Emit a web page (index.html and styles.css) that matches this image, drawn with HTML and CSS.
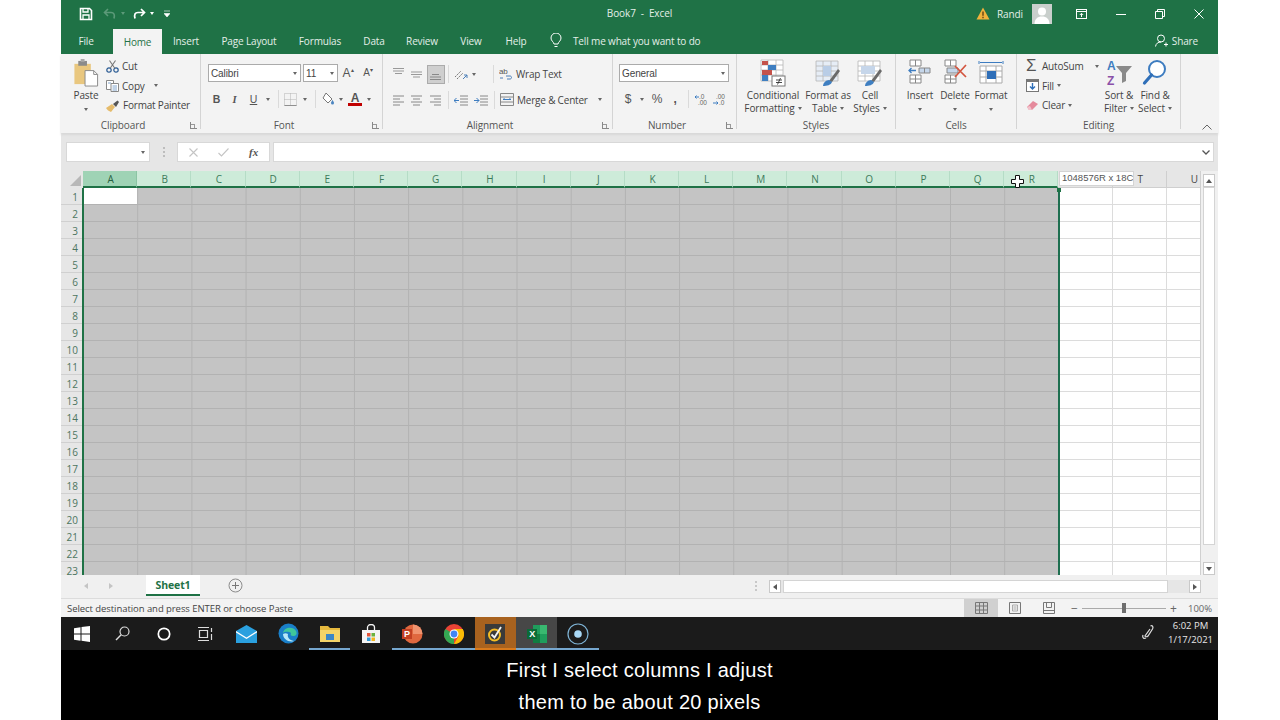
FILE: index.html
```html
<!DOCTYPE html>
<html>
<head>
    <meta charset="UTF-8">
    <title>Book7 - Excel</title>
    <link rel="stylesheet" href="styles.css">
</head>
<body>
<div class="screen">

    <!-- title bar -->
    <div class="titlebar">
        <div class="qat">
            <svg class="qat-save" width="14" height="14" viewBox="0 0 14 14"><path d="M1.5 1.5h9l2 2v9h-11z" fill="none" stroke="#fff" stroke-width="1.6"/><path d="M4 2v3h5V2M4 12V8h6v4" fill="none" stroke="#fff" stroke-width="1.3"/></svg>
            <svg class="qat-undo" width="14" height="12" viewBox="0 0 14 12"><path d="M5 1L1.5 4.5 5 8M2 4.5h6c3 0 4 2 3 6" fill="none" stroke="#5c9a79" stroke-width="1.6"/></svg>
            <i class="caret caret-dim"></i>
            <svg class="qat-redo" width="14" height="12" viewBox="0 0 14 12"><path d="M9 1l3.5 3.5L9 8M12 4.5H6c-3 0-4 2-3 6" fill="none" stroke="#fff" stroke-width="1.7"/></svg>
            <i class="caret caret-white"></i>
            <svg class="qat-more" width="6" height="8" viewBox="0 0 6 8"><path d="M0 1h6M0 3.5h6L3 7z" fill="#fff" stroke="#fff" stroke-width=".6"/></svg>
        </div>
        <div class="doc-title">Book7&nbsp; -&nbsp; Excel</div>
        <div class="win-tools">
            <svg class="warn" width="14" height="13" viewBox="0 0 14 13"><path d="M7 .5l6.5 12H.5z" fill="#f0b23c"/><path d="M7 4.5v4.2M7 9.8v1.4" stroke="#5a3b10" stroke-width="1.3"/></svg>
            <span class="user">Randi</span>
            <svg class="avatar" width="20" height="20" viewBox="0 0 20 20"><rect width="20" height="20" fill="#c9cfcc"/><circle cx="10" cy="7.5" r="4" fill="#fff"/><path d="M2.5 20c0-5 3-7.5 7.5-7.5s7.5 2.500 7.500 7.500z" fill="#fff"/></svg>
            <svg class="win-ribbon" width="11" height="10" viewBox="0 0 11 10"><rect x=".5" y=".5" width="10" height="9" fill="none" stroke="#fff"/><path d="M.5 2.500h10" stroke="#fff"/><path d="M5.500 8V4.500M3.800 6l1.700-1.700L7.200 6" fill="none" stroke="#fff"/></svg>
            <svg class="win-min" width="10" height="10" viewBox="0 0 10 10"><path d="M0 5.500h10" stroke="#fff"/></svg>
            <svg class="win-max" width="10" height="10" viewBox="0 0 10 10"><path d="M.5 2.500h7v7h-7zM2.500 2.500v-2h7v7h-2" fill="none" stroke="#fff"/></svg>
            <svg class="win-close" width="10" height="10" viewBox="0 0 10 10"><path d="M.5.5l9 9M9.500.5l-9 9" stroke="#fff"/></svg>
        </div>
    </div>

    <!-- tabs -->
    <div class="tabs">
        <span class="tab-file">File</span>
        <span class="tab-on">Home</span>
        <span>Insert</span>
        <span>Page Layout</span>
        <span>Formulas</span>
        <span>Data</span>
        <span>Review</span>
        <span>View</span>
        <span>Help</span>
        <div class="tell">
            <svg width="12" height="15" viewBox="0 0 12 15"><path d="M4 11C3.500 8.500 1 8 1 5a5 5 0 0 1 10 0c0 3-2.500 3.500-3 6zM4.500 13.500h3" fill="none" stroke="#fff"/></svg>
            <span>Tell me what you want to do</span>
        </div>
        <div class="share">
            <svg width="13" height="13" viewBox="0 0 13 13"><circle cx="6" cy="4.500" r="3.500" fill="none" stroke="#fff"/><path d="M.5 12.500c.5-3 2.500-4.500 5.500-4.500M9 10.500h4M11 8.500v4" fill="none" stroke="#fff"/></svg>
            <span>Share</span>
        </div>
    </div>

    <!-- ribbon -->
    <div class="ribbon">
        <div class="group g-clip">
            <div class="gbody clip-body">
                <div class="big paste">
                    <svg width="26" height="29" viewBox="0 0 26 29"><path d="M1 5h17v21H1z" fill="#e9c77f"/><rect x="5" y="2" width="9" height="5" fill="#8b8b8b"/><rect x="7.500" y="0" width="4" height="3" fill="#a8a8a8"/><path d="M12 12h9l4 4v12H12z" fill="#fff" stroke="#8a8a8a"/><path d="M21 12v4h4" fill="none" stroke="#8a8a8a"/></svg>
                    <span>Paste</span>
                    <i class="caret"></i>
                </div>
                <div class="small-col">
                    <div class="small"><svg width="13" height="13" viewBox="0 0 13 13"><circle cx="3" cy="10" r="2.200" fill="none" stroke="#2c5c94" stroke-width="1.200"/><circle cx="10" cy="10" r="2.200" fill="none" stroke="#2c5c94" stroke-width="1.200"/><path d="M4.200 8.200L9.500.5M8.800 8.200L3.500.5" stroke="#777" stroke-width="1.100"/></svg><span>Cut</span></div>
                    <div class="small"><svg width="13" height="13" viewBox="0 0 13 13"><path d="M.5 1.500h7v9h-7z" fill="#fff" stroke="#888"/><path d="M5 4.500h7.500v8H5z" fill="#fff" stroke="#888"/><path d="M2 4h3M6.500 7h4.500M6.500 9h4.500M6.500 11h4.500" stroke="#4b7fb8" stroke-width=".7"/></svg><span>Copy</span><i class="caret copy-caret"></i></div>
                    <div class="small"><svg width="14" height="13" viewBox="0 0 14 13"><path d="M0 9l6-4 3 3-4 5c-2-1-4-2-5-4z" fill="#e5bb6b"/><path d="M7 5l3 3 3-5-1.500-1.500z" fill="#555"/></svg><span>Format Painter</span></div>
                </div>
            </div>
            <div class="glabel"><span>Clipboard</span><i class="launcher"></i></div>
        </div>

        <div class="group g-font">
            <div class="gbody rows">
                <div class="row font-r1">
                    <div class="combo"><span>Calibri</span><i class="caret"></i></div>
                    <div class="combo"><span>11</span><i class="caret"></i></div>
                    <span class="grow-a">A<sup>&#9652;</sup></span>
                    <span class="shrink-a">A<sup>&#9662;</sup></span>
                </div>
                <div class="row font-r2">
                    <b class="sym">B</b>
                    <i class="sym sym-i">I</i>
                    <u class="sym">U</u>
                    <i class="caret"></i>
                    <i class="sep"></i>
                    <svg width="13" height="13" viewBox="0 0 13 13"><path d="M.5.500h12v12H.5zM6.500.5v12M.5 6.500h12" fill="none" stroke="#b3b3b3" stroke-dasharray="1 1"/><path d="M.5 12.500h12" stroke="#8f8f8f"/></svg>
                    <i class="caret"></i>
                    <i class="sep"></i>
                    <svg width="14" height="14" viewBox="0 0 14 14"><path d="M5 1l6 6-4 4-5-5z" fill="#fff" stroke="#777"/><path d="M11.500 8s1.500 2 1.500 3a1.500 1.500 0 0 1-3 0c0-1 1.500-3 1.500-3z" fill="#4b85c0"/></svg>
                    <i class="caret"></i>
                    <span class="font-color">A</span>
                    <i class="caret"></i>
                </div>
            </div>
            <div class="glabel"><span>Font</span><i class="launcher"></i></div>
        </div>

        <div class="group g-align">
            <div class="gbody rows">
                <div class="row align-r1">
                    <svg width="13" height="13" viewBox="0 0 13 13"><path d="M1 .5h11M1 3h11M3 5.500h7" stroke="#999"/></svg>
                    <svg width="13" height="13" viewBox="0 0 13 13"><path d="M1 4h11M1 6.500h11M3 9h7" stroke="#999"/></svg>
                    <span class="align-on"><svg width="13" height="13" viewBox="0 0 13 13"><path d="M3 6.500h7M1 9h11M1 11.500h11" stroke="#888"/></svg></span>
                    <i class="sep"></i>
                    <svg width="14" height="13" viewBox="0 0 14 13"><path d="M1 9l6-6M3 11l6-6" stroke="#777" stroke-dasharray="2 1"/><path d="M9 11l4-4M13 7h-3M13 7v3" fill="none" stroke="#4b7fb8"/></svg>
                    <i class="caret"></i>
                    <span></span>
                    <i class="sep"></i>
                    <div class="small wrap-btn"><svg width="14" height="14" viewBox="0 0 14 14"><text x="0" y="7" class="wrap-ab">ab</text><path d="M1 11h3M7 9h4c2 0 2 3 0 3H8" fill="none" stroke="#4b7fb8"/></svg><span>Wrap Text</span></div>
                </div>
                <div class="row align-r2">
                    <svg width="13" height="11" viewBox="0 0 13 11"><path d="M1 1h11M1 4h7M1 7h11M1 10h7" stroke="#888"/></svg>
                    <svg width="13" height="11" viewBox="0 0 13 11"><path d="M1 1h11M3 4h7M1 7h11M3 10h7" stroke="#888"/></svg>
                    <svg width="13" height="11" viewBox="0 0 13 11"><path d="M1 1h11M5 4h7M1 7h11M5 10h7" stroke="#888"/></svg>
                    <i class="sep"></i>
                    <svg width="14" height="11" viewBox="0 0 14 11"><path d="M6 1h8M6 4h8M6 7h8M6 10h8" stroke="#888"/><path d="M5 5.500H0M2.500 3L0 5.500 2.500 8" fill="none" stroke="#3d7cc0"/></svg>
                    <svg width="14" height="11" viewBox="0 0 14 11"><path d="M6 1h8M6 4h8M6 7h8M6 10h8" stroke="#888"/><path d="M0 5.500h5M2.500 3L5 5.500 2.500 8" fill="none" stroke="#3d7cc0"/></svg>
                    <i class="sep"></i>
                    <div class="small merge-btn"><svg width="14" height="13" viewBox="0 0 14 13"><path d="M.5.500h13v12H.5zM.5 4h13M.5 9h13" fill="none" stroke="#888"/><path d="M3 6.500h8M3 6.500l1.500-1M11 6.500l-1.500-1" fill="none" stroke="#3d7cc0"/></svg><span>Merge &amp; Center</span><i class="caret merge-caret"></i></div>
                </div>
            </div>
            <div class="glabel"><span>Alignment</span><i class="launcher"></i></div>
        </div>

        <div class="group g-num">
            <div class="gbody rows">
                <div class="row">
                    <div class="combo combo-num"><span>General</span><i class="caret"></i></div>
                </div>
                <div class="row num-r2">
                    <span class="num-sym">$</span>
                    <i class="caret"></i>
                    <span class="num-sym">%</span>
                    <b class="num-comma">,</b>
                    <i class="sep"></i>
                    <svg width="14" height="13" viewBox="0 0 14 13"><text x="4" y="6" class="dec">.0</text><text x="3" y="12" class="dec">.00</text><path d="M0 4h4M1.500 2.500L0 4l1.500 1.500" fill="none" stroke="#3d7cc0"/></svg>
                    <svg width="14" height="13" viewBox="0 0 14 13"><text x="3" y="6" class="dec">.00</text><text x="6" y="12" class="dec">.0</text><path d="M0 10h5M3.500 8.500L5 10l-1.500 1.500" fill="none" stroke="#3d7cc0"/></svg>
                </div>
            </div>
            <div class="glabel"><span>Number</span><i class="launcher"></i></div>
        </div>

        <div class="group g-styles">
            <div class="gbody bigs">
                <div class="big b-cond">
                    <svg width="26" height="28" viewBox="0 0 26 28"><path d="M1 1h22v21H1zM8 1v21M16 1v21M1 6h22M1 11h22M1 16h22" fill="#fff" stroke="#b5b5b5" stroke-width=".8"/><path d="M2 2h6v4H2z" fill="#c4524a"/><path d="M8 6h8v5H8z" fill="#3f7fc1"/><path d="M2 11h10v5H2z" fill="#c4524a"/><path d="M2 16h6v6H2z" fill="#3f7fc1"/><rect x="12" y="17" width="13" height="10" fill="#fff" stroke="#777"/><path d="M16 21h6M16 23.500h6M20.500 19l-3 6.500" stroke="#333" stroke-width=".9"/></svg>
                    <span>Conditional</span>
                    <span>Formatting<i class="caret caret-in"></i></span>
                </div>
                <div class="big b-table">
                    <svg width="26" height="28" viewBox="0 0 26 28"><path d="M1 2h22v20H1zM8 2v20M16 2v20M1 7h22M1 12h22M1 17h22" fill="#e6edf6" stroke="#b5b5b5" stroke-width=".8"/><rect x="8" y="7" width="8" height="10" fill="#b9cde6"/><path d="M14 22l9-12 2 2-8 11z" fill="#6a6a6a"/><path d="M8 27c0-3 3-6 6-6l3 2c-1 3-5 4-9 4z" fill="#3f7fc1"/></svg>
                    <span>Format as</span>
                    <span>Table<i class="caret caret-in"></i></span>
                </div>
                <div class="big b-cell">
                    <svg width="26" height="28" viewBox="0 0 26 28"><path d="M1 2h22v20H1zM8 2v20M16 2v20M1 7h22M1 12h22M1 17h22" fill="#fff" stroke="#b5b5b5" stroke-width=".8"/><rect x="4" y="7" width="14" height="8" fill="#c6d6ea"/><path d="M14 22l9-12 2 2-8 11z" fill="#6a6a6a"/><path d="M8 27c0-3 3-6 6-6l3 2c-1 3-5 4-9 4z" fill="#3f7fc1"/></svg>
                    <span>Cell</span>
                    <span>Styles<i class="caret caret-in"></i></span>
                </div>
            </div>
            <div class="glabel"><span>Styles</span></div>
        </div>

        <div class="group g-cells">
            <div class="gbody bigs">
                <div class="big b-ins">
                    <svg width="26" height="28" viewBox="0 0 26 28"><path d="M3 1h11v6H3zM8.500 1v6M3 16h11v8H3zM8.500 16v8M3 20h11" fill="#fff" stroke="#888"/><path d="M2 11.500h7M4.500 9L2 11.500 4.500 14" fill="none" stroke="#3d7cc0" stroke-width="1.300"/><path d="M12 9h11v5H12zM17.500 9v5" fill="#c5d6ea" stroke="#888"/></svg>
                    <span>Insert</span>
                    <i class="caret"></i>
                </div>
                <div class="big b-del">
                    <svg width="26" height="28" viewBox="0 0 26 28"><path d="M3 1h11v6H3zM8.500 1v6M3 16h11v8H3zM8.500 16v8M3 20h11" fill="#fff" stroke="#888"/><path d="M5 9h11v5H5z" fill="#c5d6ea" stroke="#888"/><path d="M13 7l11 11M24 6L13 18" stroke="#d3553f" stroke-width="1.700"/></svg>
                    <span>Delete</span>
                    <i class="caret"></i>
                </div>
                <div class="big b-fmt">
                    <svg width="26" height="28" viewBox="0 0 26 28"><path d="M1 2v3M25 2v3M2 3.500h22" fill="none" stroke="#3d7cc0"/><path d="M2 7h22v17H2zM8 7v17M18 7v17M2 12h22M2 18h22" fill="#fff" stroke="#aaa"/><rect x="9" y="12" width="9" height="8" fill="#2f6fb8"/></svg>
                    <span>Format</span>
                    <i class="caret"></i>
                </div>
            </div>
            <div class="glabel"><span>Cells</span></div>
        </div>

        <div class="group g-edit">
            <div class="gbody bigs">
                <div class="small-col edit-col">
                    <div class="small"><span class="sigma">&Sigma;</span><span>AutoSum</span><i class="caret sum-caret"></i></div>
                    <div class="small"><svg width="13" height="13" viewBox="0 0 13 13"><rect x=".5" y=".5" width="12" height="12" fill="#fff" stroke="#777"/><path d="M.5 2h12" stroke="#777" stroke-width="2"/><path d="M6.500 4v6M4 7.500L6.500 10 9 7.500" fill="none" stroke="#2f6fb8" stroke-width="1.400"/></svg><span>Fill</span><i class="caret"></i></div>
                    <div class="small"><svg width="13" height="13" viewBox="0 0 13 13"><path d="M1 8l6-6 5 3-6 6H3z" fill="#e58a9c"/><path d="M1 8l2 3h3L4 7z" fill="#f2c2cc"/></svg><span>Clear</span><i class="caret"></i></div>
                </div>
                <div class="big b-sort">
                    <svg width="28" height="28" viewBox="0 0 28 28"><text x="2" y="11" class="az az-a">A</text><text x="2" y="26" class="az az-z">Z</text><path d="M11 7h16l-6 7v8l-4 2V14z" fill="#8a8a8a"/></svg>
                    <span>Sort &amp;</span>
                    <span>Filter<i class="caret caret-in"></i></span>
                </div>
                <div class="big b-find">
                    <svg width="26" height="28" viewBox="0 0 26 28"><circle cx="15" cy="10" r="8" fill="#fff" stroke="#3d7cc0" stroke-width="2"/><path d="M9.500 16L2.500 24" stroke="#2f6fb8" stroke-width="3.200" stroke-linecap="round"/></svg>
                    <span>Find &amp;</span>
                    <span>Select<i class="caret caret-in"></i></span>
                </div>
            </div>
            <div class="glabel"><span>Editing</span></div>
        </div>

        <div class="collapse">
            <svg width="10" height="6" viewBox="0 0 10 6"><path d="M.5 5.500L5 1l4.500 4.500" fill="none" stroke="#666"/></svg>
        </div>
    </div>

    <!-- formula bar -->
    <div class="formula">
        <div class="namebox"><i class="caret"></i></div>
        <div class="fx-dots"></div>
        <div class="fx-box">
            <svg width="9" height="9" viewBox="0 0 9 9"><path d="M.5.500l8 8M8.500.500l-8 8" stroke="#c4c4c4" stroke-width="1.100"/></svg>
            <svg width="11" height="9" viewBox="0 0 11 9"><path d="M.5 5l3 3L10.500.5" fill="none" stroke="#c4c4c4" stroke-width="1.100"/></svg>
            <em>fx</em>
        </div>
        <div class="fx-input"><svg width="8" height="5" viewBox="0 0 8 5"><path d="M.5.500L4 4 7.500.5" fill="none" stroke="#555" stroke-width="1.300"/></svg></div>
    </div>

    <!-- sheet -->
    <div class="workarea">
        <div class="sheet">
            <div class="col-head">
                <div class="corner"><i></i></div>
                <span class="col-on">A</span><span class="col-sel">B</span><span class="col-sel">C</span><span class="col-sel">D</span><span class="col-sel">E</span><span class="col-sel">F</span><span class="col-sel">G</span><span class="col-sel">H</span><span class="col-sel">I</span><span class="col-sel">J</span><span class="col-sel">K</span><span class="col-sel">L</span><span class="col-sel">M</span><span class="col-sel">N</span><span class="col-sel">O</span><span class="col-sel">P</span><span class="col-sel">Q</span><span class="col-sel">R</span><span></span><span>T</span><span>U</span>
            </div>
            <div class="sheet-body">
                <div class="row-head">
                    <span>1</span><span>2</span><span>3</span><span>4</span><span>5</span><span>6</span><span>7</span><span>8</span><span>9</span><span>10</span><span>11</span><span>12</span><span>13</span><span>14</span><span>15</span><span>16</span><span>17</span><span>18</span><span>19</span><span>20</span><span>21</span><span>22</span><span>23</span>
                </div>
                <div class="cells">
                    <div class="selection"><div class="active-cell"></div></div>
                    <i class="fill-handle"></i>
                </div>
            </div>
            <div class="size-tip">1048576R x 18C</div>
            <svg class="cell-cursor" width="13" height="13" viewBox="0 0 13 13"><path d="M4.500.5h4v4h4v4h-4v4h-4v-4h-4v-4h4z" fill="#fff" stroke="#111"/></svg>
        </div>
        <div class="vscroll">
            <span class="sbtn"><i class="tri tri-up"></i></span>
            <div class="vthumb"></div>
            <span class="sbtn"><i class="tri tri-down"></i></span>
        </div>
    </div>

    <!-- sheet tabs -->
    <div class="sheetbar">
        <div class="sheet-nav"><i class="tri tri-left tri-dim"></i><i class="tri tri-right tri-dim"></i></div>
        <div class="sheet-tab">Sheet1</div>
        <svg class="add-sheet" width="15" height="15" viewBox="0 0 15 15"><circle cx="7.500" cy="7.500" r="6.500" fill="none" stroke="#8c8c8c"/><path d="M7.500 4v7M4 7.500h7" stroke="#777"/></svg>
        <div class="dots"></div>
        <div class="hscroll">
            <span class="sbtn"><i class="tri tri-left"></i></span>
            <div class="hthumb"></div>
            <span class="sbtn"><i class="tri tri-right"></i></span>
        </div>
    </div>

    <!-- status bar -->
    <div class="status">
        <span class="status-msg">Select destination and press ENTER or choose Paste</span>
        <div class="view-btn view-on"><svg width="13" height="12" viewBox="0 0 13 12"><path d="M.5.500h12v11H.5zM4.500.5v11M8.500.5v11M.5 4h12M.5 8h12" fill="none" stroke="#777"/></svg></div>
        <div class="view-btn"><svg width="12" height="12" viewBox="0 0 12 12"><path d="M.5.500h11v11H.5z" fill="none" stroke="#777"/><path d="M3.500 3h5v6h-5zM4.500 5h3M4.500 7h3" fill="none" stroke="#999" stroke-width=".8"/></svg></div>
        <div class="view-btn"><svg width="12" height="12" viewBox="0 0 12 12"><path d="M.5.500h11v11H.5zM3.500.5v5h5v-5M.5 8.500h11" fill="none" stroke="#777"/></svg></div>
        <div class="zoomer">
            <span class="z-sign">&minus;</span>
            <div class="z-track"><i></i></div>
            <span class="z-sign">+</span>
        </div>
        <span class="z-pct">100%</span>
    </div>

    <!-- taskbar -->
    <div class="taskbar">
        <div class="task"><svg width="16" height="16" viewBox="0 0 16 16"><path d="M0 2.300l6.500-1V7.500H0zM7.500 1.100L16 0v7.500H7.500zM0 8.500h6.500v6.200L0 13.700zM7.500 8.500H16V16l-8.500-1.200z" fill="#fff"/></svg></div>
        <div class="task"><svg width="15" height="15" viewBox="0 0 15 15"><circle cx="9.500" cy="5.500" r="4.500" fill="none" stroke="#ddd" stroke-width="1.200"/><path d="M6.200 8.800L1 14" stroke="#ddd" stroke-width="1.400"/></svg></div>
        <div class="task"><svg width="14" height="14" viewBox="0 0 14 14"><circle cx="7" cy="7" r="5.700" fill="none" stroke="#fff" stroke-width="1.700"/></svg></div>
        <div class="task"><svg width="15" height="14" viewBox="0 0 15 14"><path d="M0 .5h11M0 13.500h11M1.500 3.500h8v7h-8zM13.500 1v4M13.500 7v6" fill="none" stroke="#ddd" stroke-width="1.200"/></svg></div>
        <div class="task"><svg width="21" height="18" viewBox="0 0 21 18"><path d="M0 6l10.500-6L21 6v12H0z" fill="#2aa0df"/><path d="M0 6l10.500 6.500L21 6v1.500L10.500 14 0 7.500z" fill="#fff"/></svg></div>
        <div class="task"><svg width="21" height="21" viewBox="0 0 21 21"><circle cx="10.500" cy="10.500" r="10" fill="#1a7fc8"/><path d="M5 10c1-6 10-7 13-2 1.500 3 0 5-3 5-2 0-3-1-2-3-3-2-7-1-8 0z" fill="#3fc79a"/><path d="M5 11c0 5 6 9 11 7-5-1-7-4-6-7-2-1-3-1-5 0z" fill="#b6e8f8"/></svg></div>
        <div class="task task-run"><svg width="20" height="17" viewBox="0 0 20 17"><path d="M0 1h8l2 2h10v14H0z" fill="#e6b93e"/><path d="M0 5h20v12H0z" fill="#f5d468"/><rect x="6" y="9" width="8" height="6" fill="#3c87c8"/></svg></div>
        <div class="task"><svg width="20" height="20" viewBox="0 0 20 20"><path d="M1 6h18v13H1z" fill="#f4f4f4"/><path d="M6.500 6V3.500a3.500 3 0 0 1 7 0V6" fill="none" stroke="#f4f4f4" stroke-width="1.300"/><rect x="6" y="9" width="3.500" height="3.500" fill="#e2543a"/><rect x="10.500" y="9" width="3.500" height="3.500" fill="#6cb33f"/><rect x="6" y="13.500" width="3.500" height="3.500" fill="#2f9bd8"/><rect x="10.500" y="13.500" width="3.500" height="3.500" fill="#f3b61f"/></svg></div>
        <div class="task task-run"><svg width="22" height="20" viewBox="0 0 22 20"><circle cx="12" cy="10" r="9.500" fill="#e0683f"/><path d="M12 .5a9.500 9.500 0 0 1 9.500 9.500H12z" fill="#f0946f"/><rect x="1" y="5" width="10" height="10" fill="#c13f22"/><text x="3" y="13" class="ppt-p">P</text></svg></div>
        <div class="task task-run"><svg width="20" height="20" viewBox="0 0 20 20"><circle cx="10" cy="10" r="10" fill="#ea4335"/><path d="M10 10L1.300 15A10 10 0 0 1 1.300 5z" fill="#34a853"/><path d="M10 20a10 10 0 0 1-8.700-5L6 8h4z" fill="#34a853"/><path d="M10 5h8.700A10 10 0 0 1 10 20l4.500-8z" fill="#fbbc05"/><circle cx="10" cy="10" r="4.500" fill="#fff"/><circle cx="10" cy="10" r="3.400" fill="#4285f4"/></svg></div>
        <div class="task task-norton"><svg width="20" height="20" viewBox="0 0 20 20"><rect width="20" height="20" fill="#3a3a3a"/><circle cx="9.500" cy="11" r="5.500" fill="none" stroke="#f4bc24" stroke-width="2"/><path d="M6.500 10.500l3 3L16 3" fill="none" stroke="#f2f2f2" stroke-width="1.800"/></svg></div>
        <div class="task task-run task-xl"><svg width="20" height="18" viewBox="0 0 20 18"><rect x="6" y="0" width="14" height="18" fill="#1f9d5c"/><rect x="13" y="0" width="7" height="9" fill="#39b870"/><rect x="6" y="9" width="7" height="9" fill="#107c41"/><rect x="0" y="4" width="10" height="10" fill="#0b6a37"/><text x="2.300" y="12" class="xl-x">X</text></svg></div>
        <div class="task task-run"><svg width="22" height="22" viewBox="0 0 22 22"><circle cx="11" cy="11" r="10" fill="none" stroke="#7fb4d6" stroke-width="1.200"/><circle cx="11" cy="11" r="3.800" fill="#a9d8f5"/></svg></div>
        <div class="tray">
            <svg width="14" height="15" viewBox="0 0 14 15"><path d="M8.500 1c2-1 3 1 2 3L6 11c-1 1-3 1-3 0l5-7M1 10c-1 3 1 4 3 3" fill="none" stroke="#ddd" stroke-width="1.200"/></svg>
            <div class="clock"><span>6:02 PM</span><span>1/17/2021</span></div>
        </div>
    </div>

    <!-- caption -->
    <div class="caption">
        <p>First I select columns I adjust</p>
        <p>them to be about 20 pixels</p>
    </div>
</div>
</body>
</html>
```

FILE: styles.css
```css
html, body {
    margin: 0;
    padding: 0;
    background: #fff;
    overflow: hidden;
}

body {
    height: 720px;
    padding-left: 61px;
    font-family: "Open Sans", "Noto Sans", sans-serif;
    font-size: 10px;
    color: #444;
}

p {
    margin: 0;
}

i {
    font-style: normal;
}

svg {
    display: block;
    flex: none;
}

.screen {
    width: 1157px;
    height: 720px;
    display: flex;
    flex-direction: column;
}

/* small dropdown arrow */
.caret {
    display: inline-block;
    width: 0;
    height: 0;
    border-left: 2.5px solid transparent;
    border-right: 2.5px solid transparent;
    border-top: 3px solid #666;
    flex: none;
}

.caret-white {
    border-top-color: #fff;
}

.caret-dim {
    border-top-color: #5c9a79;
}

.caret-in {
    margin-left: 3px;
    vertical-align: 2px;
}

.sep {
    display: block;
    width: 1px;
    height: 18px;
    background: #dadada;
}

/* title bar */
.titlebar {
    height: 27px;
    background: #1f7246;
    display: grid;
    grid-template-columns: 1fr auto 1fr;
    align-items: center;
    color: #fff;
}

.qat {
    display: flex;
    align-items: center;
    padding-left: 18px;
}

.qat-undo {
    margin-left: 10px;
}

.qat .caret-dim {
    margin-left: 4px;
}

.qat-redo {
    margin-left: 7px;
}

.qat .caret-white {
    margin-left: 4px;
}

.qat-more {
    margin-left: 10px;
}

.doc-title {
    font-size: 10px;
    letter-spacing: -.1px;
    color: #e4efe9;
    padding-bottom: 2px;
}

.win-tools {
    display: flex;
    align-items: center;
    justify-content: flex-end;
    padding-right: 14px;
}

.user {
    margin-left: 7px;
    font-size: 10px;
    letter-spacing: -.1px;
    color: #e4efe9;
}

.avatar {
    margin-left: 9px;
}

.win-ribbon {
    margin-left: 24px;
}

.win-min {
    margin-left: 29px;
}

.win-max {
    margin-left: 29px;
}

.win-close {
    margin-left: 29px;
}

/* ribbon tabs */
.tabs {
    height: 27px;
    background: #1f7246;
    display: grid;
    grid-template-columns: 52px 49px 48px 78px 64px 44px 52px 46px 44px 1fr auto;
    justify-items: center;
    align-items: stretch;
    color: #e4efe9;
    font-size: 10px;
    letter-spacing: -.15px;
}

.tabs > span {
    display: flex;
    align-items: center;
    justify-content: center;
    width: 100%;
    padding-top: 1px;
}

.tabs .tab-file {
    box-sizing: border-box;
    padding-right: 2px;
}

.tabs .tab-on {
    background: #f3f3f3;
    color: #1f7246;
    margin-top: 2px;
    padding-top: 0;
}

.tell {
    display: flex;
    align-items: center;
    justify-self: start;
    padding-left: 12px;
    gap: 11px;
}

.share {
    display: flex;
    align-items: center;
    gap: 4px;
    padding-right: 20px;
}

/* ribbon */
.ribbon {
    height: 79px;
    background: #f3f3f3;
    display: flex;
    box-shadow: 0 2px 2px #d8d8d8;
    position: relative;
    font-size: 10px;
    letter-spacing: -.1px;
}

.group {
    display: flex;
    flex-direction: column;
    border-right: 1px solid #d4d4d4;
    margin-bottom: 4px;
}

.g-clip { width: 139px; }
.g-font { width: 181px; }
.g-align { width: 229px; }
.g-num { width: 123px; }
.g-styles { width: 158px; }
.g-cells { width: 120px; }
.g-edit { width: 163px; }

.gbody {
    box-sizing: border-box;
    height: 64px;
    flex: none;
}

.glabel {
    display: flex;
    align-items: center;
    height: 11px;
    color: #555;
    line-height: 11px;
    margin-top: 2px;
}

.glabel span {
    flex: 1;
    text-align: center;
}

.launcher {
    box-sizing: border-box;
    width: 7px;
    height: 7px;
    margin: 0 3px 0 5px;
    border-left: 1px solid #888;
    border-bottom: 1px solid #888;
    box-shadow: inset -2px 2px 0 #f3f3f3, inset -3px 3px 0 #999;
}

.clip-body {
    display: flex;
    padding-left: 10px;
}

.big {
    display: flex;
    flex-direction: column;
    align-items: center;
    padding-top: 5px;
    line-height: 13px;
    white-space: nowrap;
}

.big svg {
    height: 28px;
    margin-bottom: 2px;
}

.big .caret {
    margin-top: 6px;
}

.big .caret-in {
    margin-top: 0;
}

.paste {
    width: 30px;
}

.small-col {
    display: flex;
    flex-direction: column;
    padding-top: 2.5px;
    margin-left: 5px;
    letter-spacing: -.2px;
}

.small {
    display: flex;
    align-items: center;
    gap: 3px;
    height: 19.5px;
    white-space: nowrap;
}

.copy-caret {
    margin-left: 6px;
}

.rows {
    display: flex;
    flex-direction: column;
    gap: 8px;
    padding-top: 10px;
    padding-left: 7px;
}

.row {
    height: 18px;
    display: grid;
    align-items: center;
    justify-items: center;
}

.combo {
    box-sizing: border-box;
    height: 18px;
    width: 100%;
    background: #fff;
    border: 1px solid #ababab;
    display: flex;
    align-items: center;
    justify-content: space-between;
    padding: 0 3px 0 2px;
    font-family: "Liberation Sans", sans-serif;
    font-size: 10px;
}

.font-r1 {
    grid-template-columns: 93px 37px 20px 20px;
    column-gap: 0;
}

.font-r1 .combo:nth-child(2) {
    width: 35px;
    justify-self: end;
}

.grow-a, .shrink-a {
    color: #555;
    font-family: "Liberation Sans", sans-serif;
    font-size: 12px;
    line-height: 12px;
}

.shrink-a {
    font-size: 10px;
}

.grow-a sup, .shrink-a sup {
    font-size: 6px;
    line-height: 0;
}

.font-r2 {
    grid-template-columns: 17px 19px 19px 10px 10px 14px 16px 5px 20px 6px 22px 6px;
}

.sym {
    font-family: "Liberation Sans", sans-serif;
    font-size: 10.5px;
    color: #555;
}

.sym-i {
    font-family: "Liberation Serif", serif;
    font-style: italic;
    font-weight: 700;
}

.font-color {
    font-family: "Liberation Sans", sans-serif;
    font-weight: 700;
    font-size: 12px;
    line-height: 10px;
    width: 14px;
    text-align: center;
    color: #555;
    border-bottom: 3px solid #c00000;
}

.g-align .rows {
    padding-left: 6px;
}

.align-r1 {
    grid-template-columns: 18px 19px 19px 6px 20px 6px 12px 8px auto;
    justify-content: start;
}

.align-r2 {
    grid-template-columns: 18px 19px 19px 6px 20px 20px 6px auto;
    justify-content: start;
}

.align-on {
    width: 18px;
    height: 19px;
    background: #cfcfcf;
    border: 1px solid #ababab;
    box-sizing: border-box;
    display: flex;
    align-items: center;
    justify-content: center;
}

.wrap-btn, .merge-btn {
    justify-self: start;
    gap: 3px;
    padding-bottom: 1px;
    letter-spacing: -.2px;
}

.wrap-btn {
    padding-left: 2px;
}

.merge-btn {
    padding-left: 3px;
}

.wrap-ab {
    font-family: "Liberation Sans", sans-serif;
    font-size: 8px;
    fill: #555;
}

.merge-caret {
    margin-left: 7px;
}

.g-num .rows {
    padding-left: 6px;
}

.combo-num {
    width: 110px;
}

.g-num .row:first-child {
    justify-items: start;
}

.num-r2 {
    grid-template-columns: 18px 10px 20px 16px 10px 17px 20px;
    justify-content: start;
}

.num-sym {
    font-size: 12px;
    color: #555;
    font-family: "Liberation Sans", sans-serif;
}

.num-comma {
    font-size: 12px;
    line-height: 10px;
    color: #555;
    font-family: "Liberation Sans", sans-serif;
}

.dec {
    font-family: "Liberation Sans", sans-serif;
    font-size: 6.5px;
    fill: #666;
}

.bigs {
    display: flex;
}

.g-styles .bigs {
    padding-left: 9px;
}

.b-cond { width: 54px; }
.b-table { width: 56px; }
.b-cell { width: 28px; }

.g-cells .bigs {
    padding-left: 6px;
}

.b-ins { width: 36px; }
.b-del { width: 34px; }
.b-fmt { width: 38px; }

.edit-col {
    width: 68px;
    margin-left: 9px;
}

.sigma {
    flex: none;
    font-family: "Liberation Sans", sans-serif;
    font-size: 17px;
    line-height: 14px;
    width: 13px;
    color: #555;
}

.sum-caret {
    margin-left: 8px;
}

.az {
    font-family: "Liberation Sans", sans-serif;
    font-size: 12px;
    font-weight: 700;
}

.az-a { fill: #3d7cc0; }
.az-z { fill: #8a4fa8; }

.b-sort { width: 32px; margin-left: 9px; }
.b-find { width: 40px; }

.collapse {
    flex: 1;
    display: flex;
    justify-content: flex-end;
    align-items: flex-end;
    padding: 0 6px 3px 0;
}

/* formula bar */
.formula {
    height: 38px;
    box-sizing: border-box;
    background: #e6e6e6;
    display: flex;
    align-items: flex-start;
    padding: 9px 4px 0 5px;
}

.namebox {
    width: 84px;
    height: 20px;
    background: #fff;
    box-sizing: border-box;
    border: 1px solid #d8d8d8;
    display: flex;
    align-items: center;
    justify-content: flex-end;
    padding-right: 4px;
}

.fx-dots {
    width: 2px;
    height: 10px;
    margin: 5px 12px 0 13px;
    background: repeating-linear-gradient(180deg, #bdbdbd 0 2px, transparent 2px 4px);
}

.fx-box {
    width: 93px;
    height: 20px;
    background: #fff;
    box-sizing: border-box;
    border: 1px solid #d8d8d8;
    display: flex;
    align-items: center;
    gap: 20px;
    padding-left: 11px;
}

.fx-box em {
    font-family: "Liberation Serif", serif;
    font-size: 11px;
    color: #555;
    font-weight: 700;
}

.fx-input {
    flex: 1;
    height: 20px;
    margin-left: 3px;
    background: #fff;
    box-sizing: border-box;
    border: 1px solid #d8d8d8;
    display: flex;
    align-items: center;
    justify-content: flex-end;
    padding-right: 3px;
}

/* sheet */
.workarea {
    height: 404px;
    display: flex;
}

.sheet {
    flex: 1;
    display: flex;
    flex-direction: column;
    position: relative;
    overflow: hidden;
}

.col-head {
    height: 17px;
    flex: none;
    display: flex;
    background: #e6e6e6;
}

.corner {
    width: 22px;
    flex: none;
    box-sizing: border-box;
    padding: 4px 2px 0 9px;
}

.corner i {
    display: block;
    width: 0;
    height: 0;
    border-left: 11px solid transparent;
    border-bottom: 11px solid #b8b8b8;
}

.col-head span {
    width: 54.2px;
    flex: none;
    box-sizing: border-box;
    text-align: center;
    line-height: 17px;
    padding-left: 2px;
    border-right: 1px solid #cfcfcf;
    border-bottom: 1px solid #cfcfcf;
    color: #444;
    font-size: 10px;
}

.col-head .col-sel {
    background: #cdebd9;
    color: #3c7a59;
    border-right-color: #b5dcc6;
    border-bottom: 2px solid #1f7246;
}

.col-head .col-on {
    background: #9fd3b5;
    color: #26603f;
    border-right-color: #8cc4a4;
    border-bottom: 2px solid #1f7246;
}

.sheet-body {
    flex: 1;
    display: flex;
    min-height: 0;
}

.row-head {
    width: 22px;
    flex: none;
    background: #e6e6e6;
    color: #4c7560;
    overflow: hidden;
}

.row-head span {
    display: block;
    height: 17px;
    line-height: 18px;
    text-align: right;
    padding-right: 5px;
    box-sizing: border-box;
    border-bottom: 1px solid #d0d0d0;
    font-size: 10px;
}

.cells {
    flex: 1;
    position: relative;
    background-color: #fff;
    background-image:
        repeating-linear-gradient(90deg, transparent 0 53.2px, #dcdcdc 53.2px 54.2px),
        repeating-linear-gradient(180deg, transparent 0 16px, #dcdcdc 16px 17px);
}

.selection {
    position: absolute;
    left: -1px;
    top: 0;
    bottom: 0;
    width: 978px;
    box-sizing: border-box;
    border-left: 2px solid #1f7246;
    border-right: 2px solid #1f6f50;
    background-color: #c4c4c4;
    background-image:
        linear-gradient(90deg, transparent 0 53px, #b2b2b2 53px 54px, transparent 54px),
        repeating-linear-gradient(180deg, transparent 0 16px, #b2b2b2 16px 17px);
    background-size: 54.2px 100%, 100% 100%;
}

.active-cell {
    width: 53px;
    height: 16px;
    background: #fff;
}

.fill-handle {
    position: absolute;
    left: 974px;
    top: 0;
    width: 4px;
    height: 4px;
    background: #1f7246;
}

.size-tip {
    position: absolute;
    left: 998px;
    top: 0;
    box-sizing: border-box;
    width: 75px;
    height: 15px;
    background: #fff;
    border: 1px solid #d4d4d4;
    font-family: "Liberation Sans", sans-serif;
    font-size: 9.5px;
    line-height: 12px;
    color: #555;
    padding-left: 2px;
    white-space: nowrap;
    overflow: hidden;
}

.cell-cursor {
    position: absolute;
    left: 950px;
    top: 4px;
}

.vscroll {
    width: 18px;
    background: #f0f0f0;
    box-shadow: inset 1px 0 #d0d0d0;
    display: flex;
    flex-direction: column;
    align-items: center;
    padding-top: 3px;
    box-sizing: border-box;
}

.sbtn {
    display: flex;
    align-items: center;
    justify-content: center;
    box-sizing: border-box;
    width: 12px;
    height: 13px;
    background: #fff;
    border: 1px solid #c9c9c9;
    flex: none;
}

.tri {
    display: block;
    width: 0;
    height: 0;
    border: 3px solid transparent;
}

.tri-up { border-bottom: 4px solid #555; border-top: 0; }
.tri-down { border-top: 4px solid #555; border-bottom: 0; }
.tri-left { border-right: 4px solid #555; border-left: 0; }
.tri-right { border-left: 4px solid #555; border-right: 0; }
.tri-dim.tri-left { border-right-color: #c4c4c4; }
.tri-dim.tri-right { border-left-color: #c4c4c4; }

.vthumb {
    width: 12px;
    height: 358px;
    margin: 0 0 17px;
    background: #fff;
    border: 1px solid #d4d4d4;
    box-sizing: border-box;
    flex: none;
}

/* sheet tabs */
.sheetbar {
    height: 23px;
    background: #f0f0f0;
    display: flex;
    align-items: flex-start;
}

.sheet-nav {
    width: 85px;
    height: 21px;
    display: flex;
    align-items: center;
    gap: 21px;
    padding-left: 23px;
    box-sizing: border-box;
}

.sheet-tab {
    width: 54px;
    height: 21px;
    box-sizing: border-box;
    background: #fff;
    border-bottom: 2px solid #1f7246;
    color: #1f7246;
    font-weight: 700;
    font-size: 10.5px;
    letter-spacing: -.1px;
    text-align: center;
    line-height: 20px;
}

.add-sheet {
    margin: 3px 0 0 28px;
}

.dots {
    width: 2px;
    height: 10px;
    margin: 6px 0 0 512px;
    background: repeating-linear-gradient(180deg, #c8c8c8 0 2px, transparent 2px 4px);
}

.hscroll {
    width: 432px;
    display: flex;
    align-items: center;
    margin: 5px 0 0 12px;
    background: #e6e6e6;
    height: 13px;
    justify-content: space-between;
}

.hthumb {
    width: 385px;
    height: 13px;
    margin-right: 20px;
    margin-left: 1px;
    background: #fff;
    border: 1px solid #d4d4d4;
    box-sizing: border-box;
}

/* status bar */
.status {
    height: 19px;
    box-sizing: border-box;
    background: #f3f3f3;
    border-top: 1px solid #dcdcdc;
    display: flex;
    align-items: center;
    padding-left: 6px;
    font-size: 9.5px;
}

.status-msg {
    width: 897px;
    letter-spacing: -.06px;
}

.view-btn {
    width: 34px;
    height: 18px;
    display: flex;
    align-items: center;
    justify-content: center;
}

.view-on {
    background: #d0d0d0;
}

.zoomer {
    display: flex;
    align-items: center;
    margin-left: 4px;
    gap: 3px;
}

.z-sign {
    font-size: 12px;
    width: 9px;
    text-align: center;
    color: #666;
}

.z-track {
    width: 84px;
    height: 1px;
    background: #aaa;
    display: flex;
    justify-content: center;
    align-items: center;
}

.z-track i {
    display: block;
    width: 4px;
    height: 10px;
    background: #6e6e6e;
}

.z-pct {
    margin-left: 10px;
    color: #666;
}

/* taskbar */
.taskbar {
    height: 33px;
    background: #1b1b1b;
    display: flex;
    align-items: stretch;
}

.task {
    width: 41.4px;
    flex: none;
    display: flex;
    align-items: center;
    justify-content: center;
    box-sizing: border-box;
}

.task:first-child {
    width: 41px;
}

.task-run {
    box-shadow: inset 0 -2px 0 #76a7cf;
}

.task-norton {
    background: #a8621f;
    box-shadow: inset 0 -2px 0 #d97a1c;
}

.task-xl {
    background: #474747;
}

.ppt-p {
    font-family: "Liberation Sans", sans-serif;
    font-size: 9px;
    font-weight: 700;
    fill: #fff;
}

.xl-x {
    font-family: "Liberation Sans", sans-serif;
    font-size: 9px;
    font-weight: 700;
    fill: #fff;
}

.tray {
    flex: 1;
    display: flex;
    align-items: center;
    justify-content: flex-end;
    gap: 12px;
    padding: 0 5px 2px 0;
}

.clock {
    display: flex;
    flex-direction: column;
    align-items: center;
    color: #e8e8e8;
    line-height: 14px;
    font-size: 9.5px;
}

/* caption */
.caption {
    flex: 1;
    background: #000;
    color: #fff;
    font-family: "Liberation Sans", sans-serif;
    font-size: 20px;
    letter-spacing: .28px;
    line-height: 32px;
    text-align: center;
    padding-top: 4px;
}
```
